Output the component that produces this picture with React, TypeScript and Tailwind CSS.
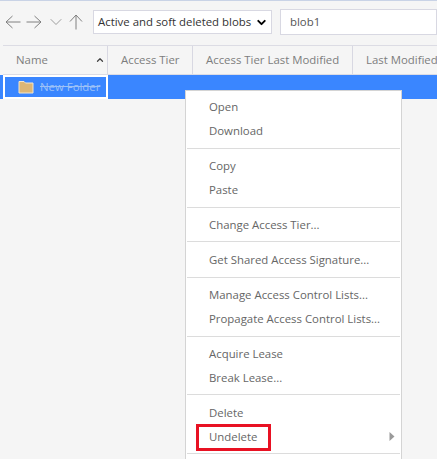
import { ChevronDown, ChevronUp } from 'lucide-react';

const groups = [
  { cls: 'pt-[4px] pb-[5px]', items: ['Open', 'Download'] },
  { cls: 'pt-[5px] pb-[5px]', items: ['Copy', 'Paste'] },
  { cls: 'pt-[5px] pb-[4px]', items: ['Change Access Tier...'] },
  { cls: 'pt-[6px] pb-[5px]', items: ['Get Shared Access Signature...'] },
  { cls: 'pt-[5px] pb-[5px]', items: ['Manage Access Control Lists...', 'Propagate Access Control Lists...'] },
  { cls: 'pt-[5px] pb-[4px]', items: ['Acquire Lease', 'Break Lease...'] },
  { cls: 'pt-[6px] pb-[4px]', items: ['Delete', 'Undelete'] },
];

function NavArrow({ flip }: { flip?: boolean }) {
  return (
    <svg width="16" height="14" viewBox="0 0 16 14" fill="none" stroke="#808080" strokeWidth="1" className={`shrink-0 ${flip ? 'rotate-180' : ''}`}>
      <path d="M1 7h14.500M7.500 1L1 7l6.500 6" />
    </svg>
  );
}

function ContextMenu() {
  return (
    <div className="absolute left-[185px] top-[89px] w-[217px] h-[369px] bg-white border-x border-t border-[#d4d4d4] text-[#666666]">
      {groups.map((g, i) => (
        <div key={i} className={`border-b border-[#dcdcdc] mx-[1px] ${g.cls}`}>
          {g.items.map(label => (
            <div key={label} className="relative h-[24px] pl-[22px] flex items-center text-[11.4px]">
              {label}
              {label === 'Undelete' && (
                <>
                  <span className="absolute left-[9px] top-[-1px] w-[75px] h-[27px] border-[3px] border-[#e81123]" />
                  <svg width="6" height="9" viewBox="0 0 6 9" className="absolute left-[202px] top-[7px]">
                    <path d="M0.500 0v9L5.500 4.500z" fill="#9a9a9a" />
                  </svg>
                </>
              )}
            </div>
          ))}
        </div>
      ))}
    </div>
  );
}

export default function App() {
  return (
    <div className="relative w-[437px] h-[459px] overflow-hidden bg-[#f5f5f5] font-['Open_Sans',sans-serif] text-[11.4px] border-t border-[#c9d3e6]">
      <div className="h-[44px] flex items-center pl-[5px] pb-[2px]">
        <div className="flex items-center w-[88px] shrink-0">
          <NavArrow />
          <div className="w-[5px] shrink-0" />
          <NavArrow flip />
          <ChevronDown className="w-[20px] h-[20px] ml-[4px] shrink-0 text-[#808080]" strokeWidth={0.9} />
          <svg width="14" height="16" viewBox="0 0 14 16" fill="none" stroke="#808080" strokeWidth="1" className="ml-[3px] shrink-0">
            <path d="M7 15.500V1M1 7.500L7 1l6 6.500" />
          </svg>
        </div>
        <div className="w-[179px] h-[24px] shrink-0 bg-white border border-[#d8d8e2] flex items-center justify-between pl-[4px] pr-[3px] text-[#333333] whitespace-nowrap">
          <span>Active and soft deleted blobs</span>
          <ChevronDown className="w-[13px] h-[13px] text-black" strokeWidth={3.5} />
        </div>
        <div className="ml-[8px] flex-1 h-[26px] bg-white border border-[#d8d8e2] flex items-center pl-[9px] text-[#555555]">
          blob1
        </div>
      </div>

      <div className="ml-[3px] h-[30px] flex items-stretch border-y border-[#dcdce4] text-[#7d7d7d] whitespace-nowrap">
        <div className="w-[105px] shrink-0 flex items-center justify-between pl-[13px] pr-[2px] border-r border-[#d8d8e2]">
          <span>Name</span>
          <ChevronUp className="w-[10px] h-[10px] text-[#444444]" strokeWidth={3} />
        </div>
        <div className="w-[85px] shrink-0 flex items-center pl-[13px] border-r border-[#d8d8e2]">Access Tier</div>
        <div className="w-[160px] shrink-0 flex items-center pl-[13px] border-r border-[#d8d8e2]">Access Tier Last Modified</div>
        <div className="flex-1 flex items-center pl-[13px]">Last Modified</div>
      </div>

      <div className="h-[24px] bg-[#3a86ff] flex items-stretch">
        <div className="ml-[3px] w-[105px] shrink-0 border-[2px] border-white flex items-center pl-[13px] gap-[6px] bg-[#3a86ff]">
          <svg width="16" height="14" viewBox="0 0 16 14" className="shrink-0">
            <path d="M1 1.500h5l1.500 1.500h7.500v10H1z" fill="#dcb676" stroke="#f3e6cd" strokeWidth="1" />
          </svg>
          <span className="line-through text-[#9cc1f7] whitespace-nowrap">New Folder</span>
        </div>
      </div>

      <ContextMenu />
    </div>
  );
}
